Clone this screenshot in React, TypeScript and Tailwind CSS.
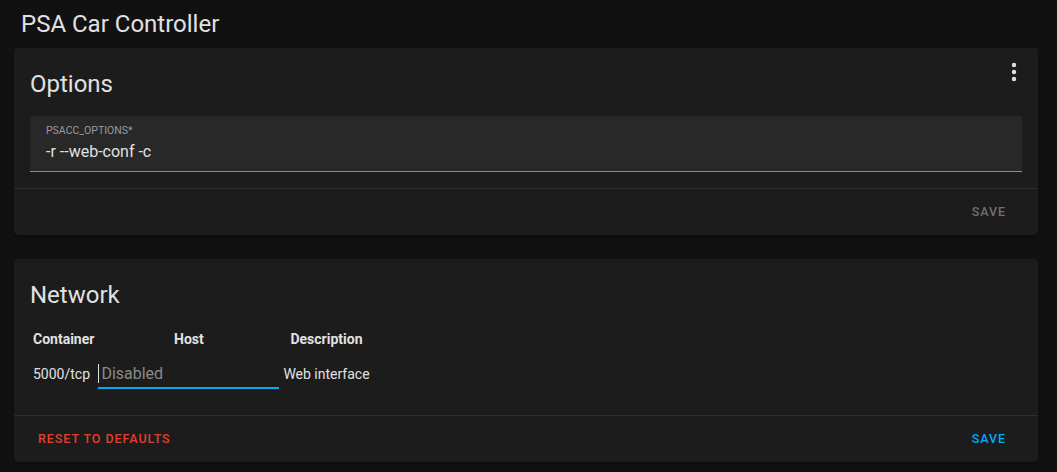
import { EllipsisVertical } from "lucide-react";

function Card({
  title,
  menu,
  children,
  actions,
}: {
  title: string;
  menu?: boolean;
  children: React.ReactNode;
  actions: React.ReactNode;
}) {
  return (
    <section className="relative rounded-[4px] bg-[#1c1c1c] shadow-[0_2px_2px_rgba(0,0,0,0.3)]">
      <h2 className="px-4 pt-5 pb-4 text-[24px] leading-8 font-normal text-[#e1e1e1]">{title}</h2>
      {menu && (
        <button className="absolute top-0 right-0 flex h-12 w-12 items-center justify-center text-[#e1e1e1]">
          <EllipsisVertical size={24} strokeWidth={2.4} />
        </button>
      )}
      {children}
      <div className="flex h-[47px] items-center justify-between border-t border-[#2f2f2f] px-2">{actions}</div>
    </section>
  );
}

const btn = "px-4 text-[12.5px] font-medium uppercase tracking-[0.075em]";

export default function App() {
  return (
    <div className="min-h-screen bg-[#111111] pl-[14px] pr-[19px] font-['Roboto',sans-serif] text-[#e1e1e1]">
      <h1 className="pl-[7px] pt-2 text-[24px] leading-8 font-normal text-[#e1e1e1]">PSA Car Controller</h1>

      <div className="mt-2 flex flex-col gap-6">
        {/* options */}
        <Card
          title="Options"
          menu
          actions={
            <>
              <span />
              <button className={`mr-2 text-[#6f6f6f] ${btn}`}>Save</button>
            </>
          }
        >
          <div className="px-4 pb-4">
            <div className="h-[56px] rounded-t-[4px] border-b border-[#8c8c8c] bg-[#282828] px-4 pt-[9px]">
              <div className="text-[10.5px] leading-3 text-[#9a9a9a]">PSACC_OPTIONS*</div>
              <div className="mt-[5px] text-[16px] leading-5 text-[#e1e1e1]">-r --web-conf -c</div>
            </div>
          </div>
        </Card>

        {/* network */}
        <Card
          title="Network"
          actions={
            <>
              <button className={`text-[#e0402f] ${btn}`}>Reset to defaults</button>
              <button className={`mr-2 text-[#03a9f4] ${btn}`}>Save</button>
            </>
          }
        >
          <div className="px-4 pb-[23px]">
            <table className="border-separate border-spacing-[2px] text-[14px]">
              <thead>
                <tr>
                  <th className="p-[1px] text-left leading-[19px] font-bold">Container</th>
                  <th className="p-[1px] text-center leading-[19px] font-bold">Host</th>
                  <th className="p-[1px] text-center leading-[19px] font-bold">Description</th>
                </tr>
              </thead>
              <tbody>
                <tr className="align-baseline">
                  <td className="p-[1px]">5000/tcp</td>
                  <td className="p-[1px]">
                    <div className="w-[181px] border-b-2 border-[#03a9f4] pt-[9px] pb-[1px] text-[16px] leading-6">
                      <span className="inline-block h-[19px] w-px bg-[#e1e1e1] align-[-4px]" />
                      <span className="ml-[2px] text-[#8a8a8a]">Disabled</span>
                    </div>
                  </td>
                  <td className="p-[1px]">Web interface</td>
                </tr>
              </tbody>
            </table>
          </div>
        </Card>
      </div>
    </div>
  );
}
